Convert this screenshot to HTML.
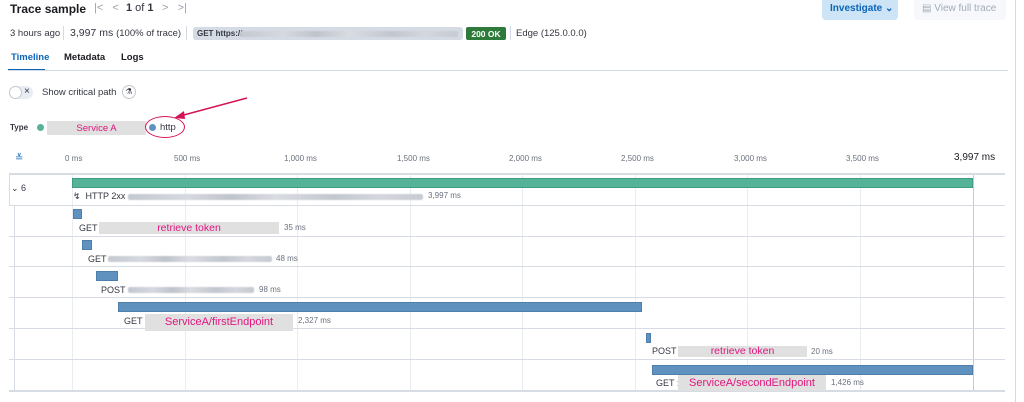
<!DOCTYPE html>
<html><head><style>
*{margin:0;padding:0;box-sizing:border-box}
body{width:1024px;height:402px;background:#fff;font-family:"Liberation Sans",sans-serif;color:#343741;position:relative;overflow:hidden}
.a{position:absolute;white-space:nowrap}
.blur{position:absolute;height:6px;border-radius:2px;background:linear-gradient(90deg,#c4c8d0,#d6d9df 20%,#bfc3cb 35%,#d9dce1 50%,#c2c6ce 70%,#d4d7dd 85%,#c6cad1);filter:blur(0.6px)}
.gl{position:absolute;top:174px;height:216px;width:1px;background:#e9ecf1}
.hl{position:absolute;left:9px;width:996px;height:1px;background:#d7dce4}
.bar{position:absolute;height:10px;background:#6092c0;border:1px solid #4f7eab}
.t{font-size:8px;color:#69707d}
.lbl{font-size:9px;color:#343741}
.mask{position:absolute;background:#e0e0e0;color:#e0157d;font-size:11px;text-align:center}
</style></head><body>
<div class="a" style="left:10px;top:2px;font-size:12px;font-weight:bold;color:#1a1c21">Trace sample</div>
<div class="a" style="left:94px;top:2px;font-size:11px;color:#98a2b3">|&lt;&nbsp;&nbsp;&nbsp;&lt;</div>
<div class="a" style="left:126px;top:2px;font-size:11px;color:#343741"><b>1</b> of <b>1</b></div>
<div class="a" style="left:162px;top:2px;font-size:11px;color:#98a2b3">&gt;&nbsp;&nbsp;&nbsp;&gt;|</div>
<div class="a" style="left:822px;top:-4px;width:76px;height:24px;background:#cce4f5;border-radius:4px;color:#0b64b8;font-size:10px;font-weight:bold;padding:7px 0 0 8px">Investigate &#8964;</div>
<div class="a" style="left:914px;top:-4px;width:92px;height:24px;background:#f7f8fb;border-radius:4px;color:#a2abba;font-size:10px;padding:7px 0 0 8px">&#9636; View full trace</div>
<div class="a" style="left:1015px;top:0;width:1px;height:402px;background:#d3dae6"></div>
<div class="a" style="left:10px;top:28px;font-size:9.5px">3 hours ago</div>
<div class="a" style="left:63px;top:26px;width:1px;height:14px;background:#d3dae6"></div>
<div class="a" style="left:70px;top:27px;font-size:10.5px">3,997 ms <span style="font-size:9.5px">(100% of trace)</span></div>
<div class="a" style="left:186px;top:26px;width:1px;height:14px;background:#d3dae6"></div>
<div class="a" style="left:193px;top:27px;width:270px;height:13px;background:#d5dbe5;border-radius:3px;font-size:8px;font-weight:bold;padding:2px 4px">GET https://</div>
<div class="blur" style="left:240px;top:31px;width:218px"></div>
<div class="a" style="left:466px;top:27px;width:40px;height:13px;background:#2d7a3a;color:#fff;font-size:8.5px;font-weight:bold;text-align:center;padding-top:2px;border-radius:2px">200 OK</div>
<div class="a" style="left:510px;top:26px;width:1px;height:14px;background:#d3dae6"></div>
<div class="a" style="left:516px;top:28px;font-size:9.5px">Edge (125.0.0.0)</div>
<div class="a" style="left:11px;top:52px;font-size:9.5px;font-weight:bold;color:#0b64b8">Timeline</div>
<div class="a" style="left:64px;top:52px;font-size:9.5px;font-weight:bold;color:#1a1c21">Metadata</div>
<div class="a" style="left:121px;top:52px;font-size:9.5px;font-weight:bold;color:#1a1c21">Logs</div>
<div class="a" style="left:8px;top:69px;width:37px;height:2px;background:#0b64b8"></div>
<div class="a" style="left:8px;top:70px;width:1000px;height:1px;background:#d3dae6"></div>
<div class="a" style="left:9px;top:86px;width:24px;height:13px;border-radius:7px;background:#e9edf3"></div>
<div class="a" style="left:9px;top:86px;width:13px;height:13px;border-radius:50%;background:#fff;border:1px solid #c2c8d2"></div>
<div class="a" style="left:24px;top:86px;font-size:10px;color:#343741">×</div>
<div class="a" style="left:42px;top:87px;font-size:9.5px">Show critical path</div>
<div class="a" style="left:122px;top:85px;width:14px;height:14px;border-radius:50%;border:1px solid #c2c8d2;font-size:8px;text-align:center;line-height:12px">⚗</div>
<div class="a" style="left:10px;top:123px;font-size:8px;font-weight:bold">Type</div>
<div class="a" style="left:37px;top:124px;width:7px;height:7px;border-radius:50%;background:#54b399"></div>
<div class="a mask" style="left:47px;top:121px;width:99px;height:14px;font-size:9.5px;padding-top:2px">Service A</div>
<div class="a" style="left:149px;top:124px;width:7px;height:7px;border-radius:50%;background:#6092c0"></div>
<div class="a" style="left:160px;top:122px;font-size:9.5px">http</div>
<div class="a" style="left:145px;top:116px;width:40px;height:22px;border:1.5px solid #d4145a;border-radius:50%"></div>
<svg class="a" style="left:170px;top:96px" width="80" height="26"><line x1="77" y1="2" x2="10" y2="20" stroke="#d4145a" stroke-width="1.5"/><polygon points="4,22 14,15 15,23" fill="#d4145a"/></svg>
<div class="a" style="left:15px;top:153px;font-size:10px;color:#0b64b8">≚</div>
<div class="a t" style="left:65px;top:154px">0 ms</div>
<div class="a t" style="left:174px;top:154px">500 ms</div>
<div class="a t" style="left:284px;top:154px">1,000 ms</div>
<div class="a t" style="left:397px;top:154px">1,500 ms</div>
<div class="a t" style="left:509px;top:154px">2,000 ms</div>
<div class="a t" style="left:621px;top:154px">2,500 ms</div>
<div class="a t" style="left:734px;top:154px">3,000 ms</div>
<div class="a t" style="left:846px;top:154px">3,500 ms</div>
<div class="a" style="left:954px;top:152px;font-size:10px;color:#1a1c21">3,997 ms</div>
<div class="gl" style="left:72px"></div><div class="gl" style="left:185px"></div><div class="gl" style="left:297px"></div><div class="gl" style="left:410px"></div><div class="gl" style="left:522px"></div><div class="gl" style="left:635px"></div><div class="gl" style="left:747px"></div><div class="gl" style="left:860px"></div>
<div class="a" style="left:973px;top:174px;width:1px;height:216px;background:#c5cbd6"></div>
<div class="a" style="left:14px;top:205px;width:1px;height:185px;background:#d7dce4"></div>
<div class="a" style="left:9px;top:174px;width:1px;height:31px;background:#d7dce4"></div>
<div class="hl" style="top:173px;height:2px"></div>
<div class="hl" style="top:205px"></div><div class="hl" style="top:236px"></div><div class="hl" style="top:266px"></div><div class="hl" style="top:297px"></div><div class="hl" style="top:328px"></div><div class="hl" style="top:359px"></div><div class="hl" style="top:390px;height:2px"></div>
<div class="a" style="left:11px;top:183px;font-size:9px">⌄ 6</div>
<div class="a" style="left:72px;top:178px;width:901px;height:10px;background:#54b399;border:1px solid #3f9c81"></div>
<div class="a lbl" style="left:73px;top:191px">↯&nbsp; HTTP 2xx</div>
<div class="blur" style="left:128px;top:194px;width:295px"></div>
<div class="a t" style="left:428px;top:191px">3,997 ms</div>
<div class="bar" style="left:73px;top:209px;width:9px"></div>
<div class="a lbl" style="left:79px;top:223px">GET</div>
<div class="mask" style="left:99px;top:222px;width:180px;height:12px;font-size:10.5px;line-height:12px">retrieve token</div>
<div class="a t" style="left:284px;top:223px">35 ms</div>
<div class="bar" style="left:82px;top:240px;width:10px"></div>
<div class="a lbl" style="left:88px;top:254px">GET</div>
<div class="blur" style="left:108px;top:256px;width:164px"></div>
<div class="a t" style="left:276px;top:254px">48 ms</div>
<div class="bar" style="left:96px;top:271px;width:22px"></div>
<div class="a lbl" style="left:101px;top:285px">POST</div>
<div class="blur" style="left:128px;top:287px;width:126px"></div>
<div class="a t" style="left:259px;top:285px">98 ms</div>
<div class="bar" style="left:118px;top:302px;width:524px"></div>
<div class="a lbl" style="left:124px;top:316px">GET :</div>
<div class="mask" style="left:145px;top:314px;width:148px;height:17px;font-size:11px;line-height:16px">ServiceA/firstEndpoint</div>
<div class="a t" style="left:298px;top:316px">2,327 ms</div>
<div class="bar" style="left:646px;top:333px;width:5px"></div>
<div class="a lbl" style="left:652px;top:346px">POST</div>
<div class="mask" style="left:678px;top:346px;width:129px;height:11px;font-size:10.5px;line-height:11px">retrieve token</div>
<div class="a t" style="left:811px;top:347px">20 ms</div>
<div class="bar" style="left:652px;top:365px;width:321px"></div>
<div class="a lbl" style="left:656px;top:378px">GET :</div>
<div class="mask" style="left:678px;top:375px;width:148px;height:16px;font-size:11px;line-height:16px">ServiceA/secondEndpoint</div>
<div class="a t" style="left:831px;top:378px">1,426 ms</div>
</body></html>
